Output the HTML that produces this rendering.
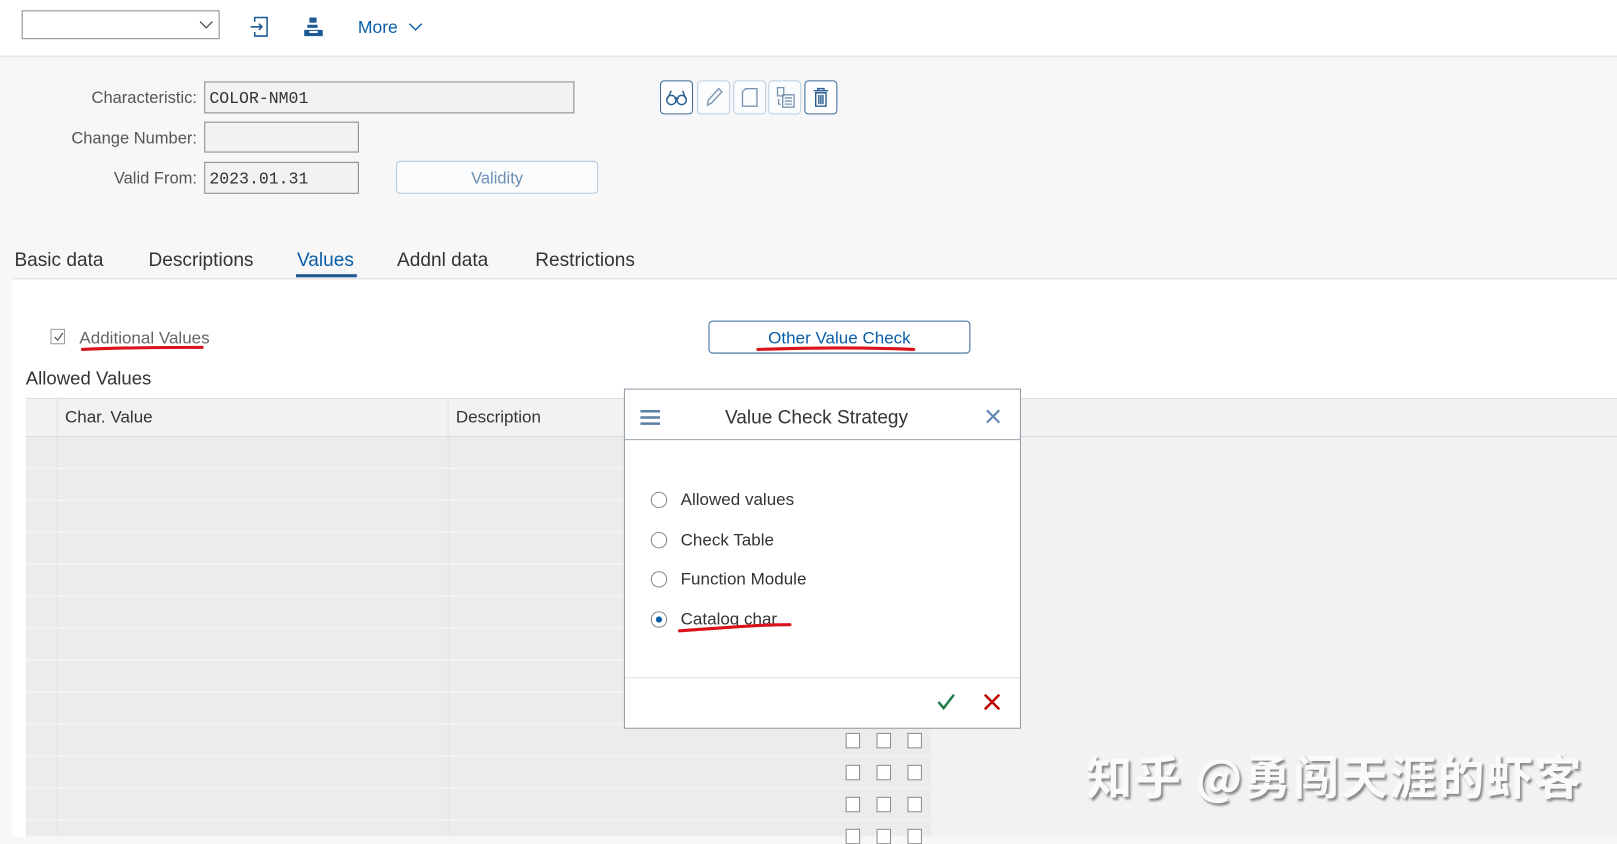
<!DOCTYPE html>
<html><head><meta charset="utf-8"><style>
html,body{margin:0;padding:0;width:1617px;height:836px;overflow:hidden;background:#f7f7f7;font-family:"Liberation Sans","Noto Sans CJK SC",sans-serif;}
#w{position:absolute;left:0;top:0;width:1568px;height:811px;transform:scale(1.03125,1.0308);transform-origin:0 0;background:#f7f7f7;}
.a{position:absolute;}
.lbl{position:absolute;right:1377px;font-size:16px;color:#555;}
.inp{position:absolute;background:#f2f2f2;border:1px solid #8a8a8a;box-sizing:border-box;font-family:"Liberation Mono",monospace;font-size:16px;color:#333;padding:6px 4px;}
.ib{position:absolute;top:78px;width:32px;height:33px;box-sizing:border-box;border:1px solid #b9cfe2;border-radius:4px;background:#fafcfe;}
.ib.d{border:1.5px solid #3b6a97;background:#fff;}
.tab{position:absolute;top:241px;font-size:18.5px;color:#333;}
.hl{position:absolute;height:1px;background:#e0e0e0;}
.rad{position:absolute;left:631px;width:16px;height:16px;border:1px solid #888;border-radius:50%;box-sizing:border-box;background:#fff;}
.rt{position:absolute;left:660px;font-size:16.5px;color:#333;}
.cb{position:absolute;width:14px;height:15px;border:1px solid #8a8a8a;box-sizing:border-box;background:#fff;}
</style></head><body><div id="w">
<div class="a" style="left:0;top:0;width:1568px;height:54px;background:#fff;border-bottom:1px solid #ddd;"></div>
<div class="a" style="left:21px;top:10px;width:192px;height:28px;border:1px solid #8a8a8a;box-sizing:border-box;background:#fff;"></div>
<svg class="a" style="left:192px;top:18px" width="16" height="12"><path d="M2 3 L8 9 L14 3" fill="none" stroke="#555" stroke-width="1.3"/></svg>
<svg class="a" style="left:240px;top:15px" width="22" height="22"><path d="M7 6 V2 H19 V20 H7 V16" fill="none" stroke="#1d5a93" stroke-width="1.5"/><path d="M3 11 H14 M11 8 L14 11 L11 14" fill="none" stroke="#1d5a93" stroke-width="1.5"/></svg>
<svg class="a" style="left:293px;top:15px" width="22" height="22"><rect x="7" y="2" width="7" height="5" fill="#1d5a93"/><rect x="5" y="9" width="10" height="3" fill="#1d5a93"/><path d="M2 14 H20 V20 H2Z" fill="#1d5a93"/><rect x="7" y="15" width="8" height="2" fill="#fff"/></svg>
<div class="a" style="left:347px;top:17px;font-size:17px;color:#0a5ea8;">More</div>
<svg class="a" style="left:395px;top:20px" width="16" height="12"><path d="M2 3 L8 9 L14 3" fill="none" stroke="#0a5ea8" stroke-width="1.4"/></svg>
<div class="lbl" style="top:87px;">Characteristic:</div>
<div class="lbl" style="top:126px;">Change Number:</div>
<div class="lbl" style="top:165px;">Valid From:</div>
<div class="inp" style="left:198px;top:79px;width:359px;height:31px;padding-top:7px;">COLOR-NM01</div>
<div class="inp" style="left:198px;top:118px;width:150px;height:30px;"></div>
<div class="inp" style="left:198px;top:157px;width:150px;height:31px;padding-top:7px;">2023.01.31</div>
<div class="a" style="left:384px;top:156px;width:196px;height:32px;border:1px solid #b3cbe0;border-radius:4px;box-sizing:border-box;background:#fbfcfe;text-align:center;line-height:33px;font-size:16px;color:#6b8fb3;">Validity</div>
<div class="ib d" style="left:640px;"><svg width="30" height="30"><circle cx="10" cy="18" r="4.5" fill="none" stroke="#2b5f92" stroke-width="1.4"/><circle cx="20" cy="18" r="4.5" fill="none" stroke="#2b5f92" stroke-width="1.4"/><path d="M6 17 L10 9 M24 17 L21 9 M13 17 Q15 15 17 17" fill="none" stroke="#2b5f92" stroke-width="1.4"/></svg></div>
<div class="ib" style="left:676px;"><svg width="30" height="30"><path d="M9 23 L10 18 L20 7 L23 10 L13 21 Z" fill="none" stroke="#7a95b0" stroke-width="1.3"/></svg></div>
<div class="ib" style="left:711px;"><svg width="30" height="30"><path d="M11 7 H22 V24 H8 V10 Z" fill="none" stroke="#7a95b0" stroke-width="1.3"/></svg></div>
<div class="ib" style="left:745px;"><svg width="32" height="30"><path d="M8 6 H14 V14 H8Z M13 13 H24 V25 H13Z M15 16 H22 M15 19 H22 M15 22 H22 M9 17 V22 H11" fill="none" stroke="#7a95b0" stroke-width="1.3"/></svg></div>
<div class="ib d" style="left:780px;"><svg width="30" height="30"><path d="M8 9 H22 M12 9 V7 H18 V9 M10 11 H20 V24 H10Z M13 13 V22 M15 13 V22 M17 13 V22" fill="none" stroke="#2b5f92" stroke-width="1.4"/></svg></div>
<div class="tab" style="left:14px;">Basic data</div>
<div class="tab" style="left:144px;">Descriptions</div>
<div class="tab" style="left:288px;color:#0a5ea8;">Values</div>
<div class="tab" style="left:385px;">Addnl data</div>
<div class="tab" style="left:519px;">Restrictions</div>
<div class="a" style="left:287px;top:266px;width:59px;height:3px;background:#1d5a93;"></div>
<div class="a" style="left:12px;top:270px;width:1556px;height:541px;background:#fff;border-top:1px solid #ddd;"></div>
<div class="cb" style="left:49px;top:319px;border-color:#999;"></div>
<svg class="a" style="left:50px;top:320px" width="14" height="14"><path d="M3 7 L6 10 L11 3" fill="none" stroke="#555" stroke-width="1.2"/></svg>
<div class="a" style="left:77px;top:319px;font-size:16.5px;color:#666;">Additional Values</div>
<svg class="a" style="left:78px;top:333px" width="122" height="10"><path d="M2 6 Q40 4 118 4" stroke="#d9121b" stroke-width="3" fill="none" stroke-linecap="round"/></svg>
<div class="a" style="left:687px;top:311px;width:254px;height:32px;border:1px solid #3a6a98;border-radius:4px;box-sizing:border-box;background:#fff;text-align:center;line-height:33px;font-size:16.5px;color:#0a5ea8;">Other Value Check</div>
<svg class="a" style="left:732px;top:334px" width="158" height="10"><path d="M3 5 Q80 2 154 5" stroke="#d9121b" stroke-width="3" fill="none" stroke-linecap="round"/></svg>
<div class="a" style="left:25px;top:357px;font-size:18px;color:#333;">Allowed Values</div>
<div class="a" style="left:25px;top:386px;width:1543px;height:425px;background:#f2f2f2;border-top:1px solid #ddd;"></div>
<div class="a" style="left:25px;top:424px;width:878px;height:387px;background:#ececec;"></div>
<div class="a" style="left:55px;top:387px;width:1px;height:424px;background:#e2e2e2;"></div>
<div class="a" style="left:434px;top:387px;width:1px;height:424px;background:#e2e2e2;"></div>
<div class="hl" style="left:25px;top:423px;width:1543px;background:#d8d8d8;"></div>
<div class="a" style="left:63px;top:396px;font-size:16.5px;color:#333;">Char. Value</div>
<div class="a" style="left:442px;top:396px;font-size:16.5px;color:#333;">Description</div>
<div class="hl" style="left:25px;top:454px;width:878px;background:#f6f6f6;"></div>
<div class="hl" style="left:25px;top:485px;width:878px;background:#f6f6f6;"></div>
<div class="hl" style="left:25px;top:516px;width:878px;background:#f6f6f6;"></div>
<div class="hl" style="left:25px;top:547px;width:878px;background:#f6f6f6;"></div>
<div class="hl" style="left:25px;top:578px;width:878px;background:#f6f6f6;"></div>
<div class="hl" style="left:25px;top:609px;width:878px;background:#f6f6f6;"></div>
<div class="hl" style="left:25px;top:640px;width:878px;background:#f6f6f6;"></div>
<div class="hl" style="left:25px;top:671px;width:878px;background:#f6f6f6;"></div>
<div class="hl" style="left:25px;top:702px;width:878px;background:#f6f6f6;"></div>
<div class="hl" style="left:25px;top:733px;width:878px;background:#f6f6f6;"></div>
<div class="hl" style="left:25px;top:764px;width:878px;background:#f6f6f6;"></div>
<div class="hl" style="left:25px;top:795px;width:878px;background:#f6f6f6;"></div>
<div class="cb" style="left:820px;top:711px;"></div><div class="cb" style="left:850px;top:711px;"></div><div class="cb" style="left:880px;top:711px;"></div>
<div class="cb" style="left:820px;top:742px;"></div><div class="cb" style="left:850px;top:742px;"></div><div class="cb" style="left:880px;top:742px;"></div>
<div class="cb" style="left:820px;top:773px;"></div><div class="cb" style="left:850px;top:773px;"></div><div class="cb" style="left:880px;top:773px;"></div>
<div class="cb" style="left:820px;top:804px;"></div><div class="cb" style="left:850px;top:804px;"></div><div class="cb" style="left:880px;top:804px;"></div>
<div class="a" style="left:1053px;top:719px;font-size:45px;color:#fafafa;text-shadow:2px 2px 2px #888;font-family:'Noto Sans CJK SC',sans-serif;font-weight:bold;letter-spacing:2px;">知乎 @勇闯天涯的虾客</div>
<div class="a" style="left:605px;top:377px;width:385px;height:330px;background:#fff;border:1px solid #8f9aa5;box-sizing:border-box;"></div>
<div class="hl" style="left:606px;top:426px;width:383px;background:#9aa6b2;"></div>
<div class="hl" style="left:606px;top:657px;width:383px;background:#ddd;"></div>
<svg class="a" style="left:620px;top:396px" width="22" height="18"><path d="M1 3 H20 M1 9 H20 M1 15 H20" stroke="#5b7fa6" stroke-width="2.4"/></svg>
<div class="a" style="left:703px;top:394px;font-size:18.5px;color:#333;">Value Check Strategy</div>
<svg class="a" style="left:955px;top:396px" width="16" height="16"><path d="M2 2 L14 14 M14 2 L2 14" stroke="#5b86b0" stroke-width="2"/></svg>
<div class="rad" style="top:477px;"></div><div class="rt" style="top:476px;">Allowed values</div>
<div class="rad" style="top:516px;"></div><div class="rt" style="top:515px;">Check Table</div>
<div class="rad" style="top:554px;"></div><div class="rt" style="top:553px;">Function Module</div>
<div class="rad" style="top:593px;"><div style="position:absolute;left:4px;top:4px;width:6px;height:6px;border-radius:50%;background:#0a5ea8;"></div></div><div class="rt" style="top:592px;">Catalog char</div>
<svg class="a" style="left:656px;top:600px" width="114" height="16"><path d="M3 12 Q30 10 60 8 Q90 6 110 6" stroke="#d9121b" stroke-width="3" fill="none" stroke-linecap="round"/></svg>
<svg class="a" style="left:908px;top:672px" width="20" height="18"><path d="M2 9 L7 15 L17 2" stroke="#1e7b4a" stroke-width="2.4" fill="none"/></svg>
<svg class="a" style="left:953px;top:672px" width="18" height="18"><path d="M2 2 L16 16 M16 2 L2 16" stroke="#bb0000" stroke-width="2.4"/></svg>
</div></body></html>
